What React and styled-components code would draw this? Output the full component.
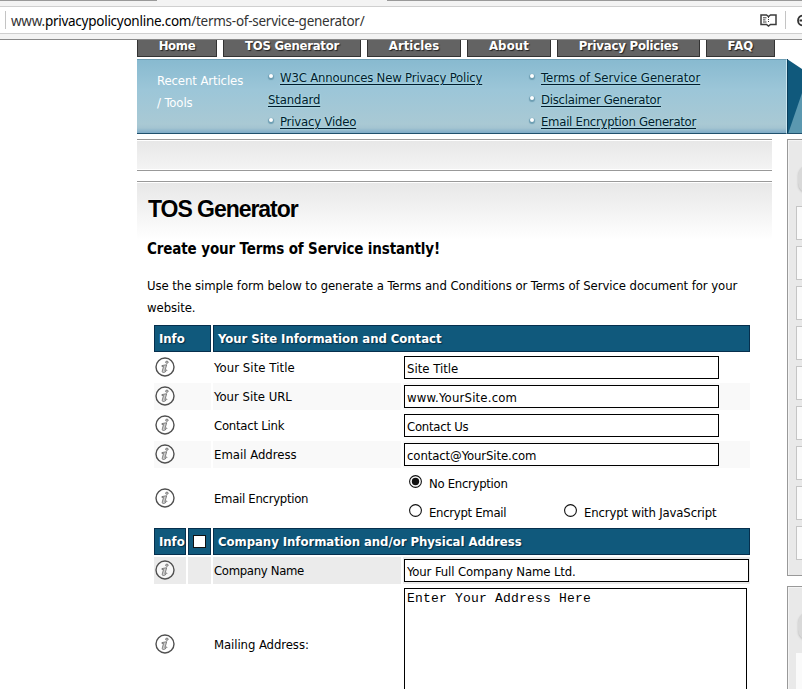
import React from "react";
import styled, { createGlobalStyle } from "styled-components";

const GlobalStyle = createGlobalStyle`
  *, *::before, *::after {
    box-sizing: border-box;
  }
  body {
    margin: 0;
    background: #fff;
    color: #000;
    font: 13px/22px "DejaVu Sans Condensed", "DejaVu Sans", sans-serif;
    font-stretch: condensed;
    overflow: hidden;
  }
`;

const Screen = styled.div`
  width: 802px;
  height: 689px;
  overflow: hidden;
`;

/*====================== Browser bar ======================*/
const Browser = styled.div`
  height: 40px;
  display: flex;
  flex-direction: column;
  background: #f3f3f3;
  border-bottom: 1px solid #8a8a8a;
`;

const TabEdge = styled.div`
  height: 6px;
  display: flex;
  justify-content: space-between;
  &::before,
  &::after {
    content: "";
    height: 1px;
    width: 157px;
    background: #999;
  }
  &::after {
    width: 415px;
  }
`;

const UrlBar = styled.div`
  height: 28px;
  display: flex;
  align-items: center;
  background: #fff;
  border-top: 1px solid #cfcfcf;
  border-bottom: 1px solid #cfcfcf;
  padding-left: 5px;
`;

const Divider = styled.div`
  width: 1px;
  height: 18px;
  background: #c4c4c4;
`;

const Url = styled.div`
  flex: 1;
  padding: 1px 0 0 5px;
  font-family: "Noto Sans", "Open Sans", sans-serif;
  font-stretch: normal;
  font-size: 13.5px;
  letter-spacing: -0.26px;
  white-space: nowrap;
  color: #333;
  span {
    color: #000;
  }
`;

const BookIcon = styled.svg`
  margin-right: 8px;
`;

const ReloadIcon = styled.svg`
  margin-left: 9px;
`;

/*====================== Page header ======================*/
const Page = styled.div`
  height: 649px;
  padding-left: 137px;
`;

const Nav = styled.div`
  display: flex;
  gap: 6px;
  height: 17px;
`;

const NavItem = styled.a`
  width: ${(p) => p.$w}px;
  height: 17px;
  background: #636363;
  border: 1px solid #333;
  border-top: 0;
  color: #fff;
  font-size: 13px;
  font-weight: bold;
  line-height: 12px;
  letter-spacing: ${(p) => p.$ls || 0}px;
  text-align: center;
  text-shadow: 1px 1px 1px #222;
  white-space: nowrap;
`;

const Banner = styled.div`
  display: flex;
  margin-top: 2px;
  height: 75px;
`;

const BannerBody = styled.div`
  width: 650px;
  display: flex;
  padding-top: 7px;
  background: linear-gradient(#88bad0 0, #9cc6d8 30px, #a9c9d4 64px, #a3c4d1 68px, #7fabc7 73px);
  border-top: 1px solid #6f9fb5;
  border-right: 1px solid #c9e6f0;
  border-bottom: 1px solid #20516d;
`;

const BannerTitle = styled.div`
  width: 131px;
  padding: 3px 0 0 20px;
  color: #fff;
  letter-spacing: -0.1px;
`;

const LinkList = styled.div`
  width: ${(p) => p.$w}px;
`;

const LinkLine = styled.div`
  white-space: nowrap;
  letter-spacing: ${(p) => p.$ls || 0}px;
  a {
    color: #001c2c;
    text-decoration: underline;
    text-underline-offset: 2px;
    text-shadow: 0 0 2px #b9ecf5;
  }
`;

const Bullet = styled.span`
  display: inline-block;
  width: 4px;
  height: 4px;
  margin: 0 7px 0 1px;
  border-radius: 50%;
  background: #fff;
  box-shadow: 0 1px 1px 1px #6d9db2;
  vertical-align: 4px;
`;

/*====================== Columns ======================*/
const Columns = styled.div`
  display: flex;
  gap: 15px;
  margin-top: 5px;
`;

const Main = styled.div`
  width: 635px;
`;

const Strip = styled.div`
  height: 32px;
  border-top: 1px solid #999;
  border-bottom: 1px solid #999;
  background: linear-gradient(#e7e7e7, #f4f4f4);
  box-shadow: inset 0 1px #fff, inset 0 -1px #fff;
`;

const Article = styled.div`
  margin-top: 10px;
  padding: 14px 10px 0;
  border-top: 1px solid #999;
  background: linear-gradient(#e7e7e7, #fff 58px);
  box-shadow: inset 0 1px #fff;
`;

const Title = styled.h1`
  margin: 0;
  padding-left: 1px;
  height: 26px;
  font: bold 23px/26px "Liberation Sans", Arial, sans-serif;
  letter-spacing: -1.05px;
  text-shadow: 0 0 2px #fff;
`;

const Subtitle = styled.h2`
  margin: 16px 0 0;
  font-size: 15px;
  line-height: 22px;
  letter-spacing: -0.13px;
`;

const Intro = styled.p`
  margin: 15px 0 0;
  letter-spacing: -0.065px;
  white-space: nowrap;
`;

/*====================== Form ======================*/
const Form = styled.div`
  display: grid;
  grid-template-columns: 32px 23px 188px 347px;
  grid-template-rows: 27px repeat(4, 27px) 56px 27px 27px 116px;
  gap: 2px;
  margin: 6px 0 0 7px;
`;

const Head = styled.div`
  grid-column: span ${(p) => p.$span || 1};
  display: flex;
  align-items: center;
  padding-left: 4px;
  background: #10597c;
  border: 1px solid #062f4d;
  color: #fff;
  font-size: 13px;
  font-weight: bold;
  letter-spacing: -0.04px;
  text-shadow: 1px 1px 1px #042c46;
  white-space: nowrap;
`;

const Cell = styled.div`
  grid-column: span ${(p) => p.$span || 1};
  display: flex;
  align-items: center;
  padding: ${(p) => p.$drop || 0}px 0 0 1px;
  background: ${(p) => p.$bg || "transparent"};
  letter-spacing: ${(p) => p.$ls || 0}px;
  white-space: nowrap;
`;

const Field = styled.input`
  width: ${(p) => p.$w || 315}px;
  height: 23px;
  padding: 1px 2px 0;
  border: 1px solid #000;
  border-radius: 0;
  background: #fff;
  color: #000;
  font: inherit;
  line-height: 18px;
  letter-spacing: inherit;
`;

const Address = styled.textarea`
  width: 343px;
  height: 140px;
  align-self: flex-start;
  margin-top: 2px;
  padding: 1px 2px;
  border: 1px solid #000;
  resize: none;
  color: #000;
  font: 13px/17px "Liberation Mono", "Courier New", monospace;
  letter-spacing: 0.2px;
  overflow: hidden;
`;

const Options = styled.div`
  display: grid;
  grid-template-columns: 155px 1fr;
  grid-template-rows: 29px 29px;
  padding: 0 0 0 5px;
`;

const Option = styled.label`
  grid-column: ${(p) => (p.$wide ? "span 2" : "auto")};
  display: flex;
  align-items: center;
  gap: 7px;
  letter-spacing: ${(p) => p.$ls || 0}px;
  svg {
    margin-bottom: 4px;
  }
`;

const Check = styled.div`
  width: 13px;
  height: 13px;
  background: #fff;
  border: 1px solid #111;
`;

/*====================== Sidebar ======================*/
const Side = styled.div`
  width: 15px;
  display: flex;
  flex-direction: column;
  gap: 10px;
`;

const Panel = styled.div`
  height: ${(p) => p.$h}px;
  display: flex;
  flex-direction: column;
  gap: 6px;
  padding: 25px 0 0 8px;
  background: #e9e9e9;
  border: 1px solid #999;
  border-right: 0;
  box-shadow: inset 1px 1px #f4f4f4;
  overflow: hidden;
`;

const Knob = styled.div`
  flex: none;
  width: 30px;
  height: 28px;
  margin: 0 0 7px 2px;
  border-radius: 10px;
  background: #d9d9d9;
  box-shadow: 0 1px 2px #bbb;
`;

const SideItem = styled.div`
  flex: none;
  height: ${(p) => p.$h || 34}px;
  background: #fafafa;
  border: ${(p) => (p.$h ? "0" : "1px solid #c5c5c5")};
  border-right: 0;
`;

const Info = styled.svg`
  margin-bottom: 1px;
`;

const InfoIcon = () => (
  <Info width="20" height="20" viewBox="0 0 20 20">
    <circle cx="10" cy="10" r="9" fill="#fff" fillOpacity=".6" stroke="#505050" strokeWidth="1.4" />
    <ellipse cx="11.9" cy="5.2" rx="1.3" ry="1.1" fill="#ccc" stroke="#666" strokeWidth=".8" />
    <path
      d="M6.9 8.6l4.8-.9-1.7 5.9c-.1.5.4.4 1.5-.7l.4.4c-1.2 1.5-2.5 2.2-3.6 2.2-1 0-1.2-.6-1-1.6l1.2-4.4-1.6-.1z"
      fill="#ccc"
      stroke="#666"
      strokeWidth=".8"
    />
  </Info>
);

const Radio = ({ checked }) => (
  <svg width="13" height="13" viewBox="0 0 13 13">
    <circle cx="6.5" cy="6.5" r="5.9" fill="#fff" stroke="#111" strokeWidth="1.1" />
    {checked && <circle cx="6.5" cy="6.5" r="3.7" fill="#111" />}
  </svg>
);

// label, width, letter spacing
const nav = [
  ["Home", 80, -0.3],
  ["TOS Generator", 138, -0.26],
  ["Articles", 94, 0],
  ["About", 84, 0.15],
  ["Privacy Policies", 143, -0.2],
  ["FAQ", 69, 0.1],
];

const tools = [
  ["Terms of Service Generator", 0],
  ["Disclaimer Generator", -0.25],
  ["Email Encryption Generator", -0.27],
];

// label, its spacing, value, its spacing
const fields = [
  ["Your Site Title", 0.07, "Site Title", 0],
  ["Your Site URL", 0, "www.YourSite.com", 0.19],
  ["Contact Link", -0.25, "Contact Us", -0.25],
  ["Email Address", 0, "contact@YourSite.com", -0.1],
];

const App = () => (
  <Screen>
    <GlobalStyle />
    <Browser>
      <TabEdge />
      <UrlBar>
        <Divider />
        <Url>
          www.<span>privacypolicyonline.com</span>/terms-of-service-generator/
        </Url>
        <BookIcon width="17" height="13" viewBox="0 0 17 13">
          <path
            d="M1 1h5.5l2 1.5 2-1.5H16v9.5h-5.5l-2 1.5-2-1.5H1z"
            fill="none"
            stroke="#3c3c3c"
            strokeWidth="1.5"
          />
          <path d="M8.5 2.5V4M8.5 5v1M8.5 7v1M3 3.8h3.5M3 5.9h2.5M3 8h3.5" fill="none" stroke="#3c3c3c" />
        </BookIcon>
        <Divider />
        <ReloadIcon width="7" height="13" viewBox="0 0 7 13">
          <path d="M8 1.5a5 5 0 1 0 0 10M4.5 6.5H8" fill="none" stroke="#333" strokeWidth="1.8" />
        </ReloadIcon>
      </UrlBar>
    </Browser>
    <Page>
      <Nav>
        {nav.map(([label, w, ls]) => (
          <NavItem key={label} $w={w} $ls={ls}>
            {label}
          </NavItem>
        ))}
      </Nav>
      <Banner>
        <BannerBody>
          <BannerTitle>
            Recent Articles
            <br />/ Tools
          </BannerTitle>
          <LinkList $w={261}>
            <LinkLine $ls={-0.18}>
              <Bullet />
              <a>W3C Announces New Privacy Policy</a>
            </LinkLine>
            <LinkLine $ls={-0.12}>
              <a>Standard</a>
            </LinkLine>
            <LinkLine $ls={-0.2}>
              <Bullet />
              <a>Privacy Video</a>
            </LinkLine>
          </LinkList>
          <LinkList $w={240}>
            {tools.map(([label, ls]) => (
              <LinkLine key={label} $ls={ls}>
                <Bullet />
                <a>{label}</a>
              </LinkLine>
            ))}
          </LinkList>
        </BannerBody>
        <svg width="15" height="75" viewBox="0 0 15 75">
          <path d="M0 0L15 10V75H0z" fill="#10597c" />
          <path d="M15 34V75H1z" fill="#5b98b0" />
          <path d="M.5 0V75" stroke="#0a3e5c" />
          <path d="M0 74.5H15" stroke="#20516d" />
        </svg>
      </Banner>
      <Columns>
        <Main>
          <Strip />
          <Article>
            <Title>TOS Generator</Title>
            <Subtitle>Create your Terms of Service instantly!</Subtitle>
            <Intro>
              Use the simple form below to generate a Terms and Conditions or Terms of Service document for your
              <br />
              website.
            </Intro>
            <Form>
              <Head $span={2}>Info</Head>
              <Head $span={2}>Your Site Information and Contact</Head>
              {fields.map(([label, labelLs, value, valueLs], i) => {
                const bg = i % 2 ? "#f9f9f9" : "#fff";
                return (
                  <React.Fragment key={label}>
                    <Cell $span={2} $bg={bg}>
                      <InfoIcon />
                    </Cell>
                    <Cell $bg={bg} $ls={labelLs}>
                      {label}
                    </Cell>
                    <Cell $bg={bg} $ls={valueLs}>
                      <Field defaultValue={value} />
                    </Cell>
                  </React.Fragment>
                );
              })}
              <Cell $span={2}>
                <InfoIcon />
              </Cell>
              <Cell $ls={-0.3} $drop={2}>
                Email Encryption
              </Cell>
              <Cell>
                <Options>
                  <Option $wide $ls={-0.3}>
                    <Radio checked />
                    No Encryption
                  </Option>
                  <Option $ls={-0.3}>
                    <Radio />
                    Encrypt Email
                  </Option>
                  <Option $ls={-0.15}>
                    <Radio />
                    Encrypt with JavaScript
                  </Option>
                </Options>
              </Cell>
              <Head>Info</Head>
              <Head>
                <Check />
              </Head>
              <Head $span={2}>Company Information and/or Physical Address</Head>
              <Cell $bg="#ebebeb">
                <InfoIcon />
              </Cell>
              <Cell $bg="#ebebeb" />
              <Cell $bg="#ebebeb" $ls={-0.33}>
                Company Name
              </Cell>
              <Cell $bg="#ebebeb" $ls={-0.12}>
                <Field $w={345} defaultValue="Your Full Company Name Ltd." />
              </Cell>
              <Cell $span={2}>
                <InfoIcon />
              </Cell>
              <Cell $ls={-0.08} $drop={2}>
                Mailing Address:
              </Cell>
              <Cell>
                <Address defaultValue="Enter Your Address Here" />
              </Cell>
            </Form>
          </Article>
        </Main>
        <Side>
          <Panel $h={437}>
            <Knob />
            {[...Array(9)].map((_, i) => (
              <SideItem key={i} />
            ))}
          </Panel>
          <Panel $h={120}>
            <Knob />
            <SideItem $h={60} />
          </Panel>
        </Side>
      </Columns>
    </Page>
  </Screen>
);

export default App;
